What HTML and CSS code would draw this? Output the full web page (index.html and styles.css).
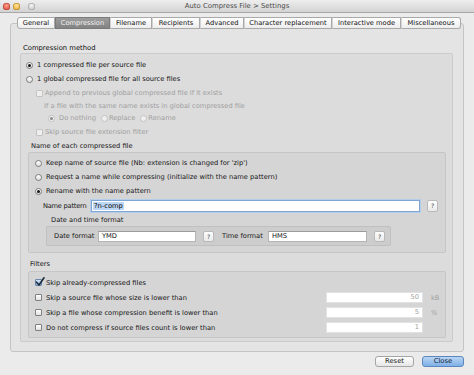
FILE: index.html
```html
<!DOCTYPE html>
<html>
<head>
<meta charset="utf-8">
<title>Auto Compress File &gt; Settings</title>
<link rel="stylesheet" href="styles.css">
</head>
<body>
<div class="titlebar">
  <div class="lights"><span class="light red"></span><span class="light yellow"></span><span class="light grey"></span></div>
  <div class="title">Auto Compress File &gt; Settings</div>
  <div></div>
</div>
<div class="content">
  <div class="pane">
    <div class="tabs">
      <div class="tab first t-general">General</div>
      <div class="tab active t-comp">Compression</div>
      <div class="tab t-file">Filename</div>
      <div class="tab t-recip">Recipients</div>
      <div class="tab t-adv">Advanced</div>
      <div class="tab t-char">Character replacement</div>
      <div class="tab t-inter">Interactive mode</div>
      <div class="tab last t-misc">Miscellaneous</div>
    </div>
    <div class="main-title">Compression method</div>
    <div class="box outer">
      <div class="row r14 ind5"><span class="radio on"></span><span class="lbl">1 compressed file per source file</span></div>
      <div class="row r14 ind5"><span class="radio"></span><span class="lbl">1 global compressed file for all source files</span></div>
      <div class="row r14 ind15 dis"><span class="check dis"></span><span class="lbl2">Append to previous global compressed file if it exists</span></div>
      <div class="row r12 ind23 dis">If a file with the same name exists in global compressed file</div>
      <div class="row r12 ind27 dis opts">
        <span class="opt"><span class="radio on dis"></span><span class="lbl">Do nothing</span></span>
        <span class="opt"><span class="radio dis"></span><span class="lbl1">Replace</span></span>
        <span class="opt"><span class="radio dis"></span><span class="lbl1">Rename</span></span>
      </div>
      <div class="row r14 ind15 dis gap1"><span class="check dis"></span><span class="lbl2">Skip source file extension filter</span></div>

      <div class="sub-title">Name of each compressed file</div>
      <div class="box inner g2">
        <div class="row r14 ind6"><span class="radio"></span><span class="lbl">Keep name of source file (Nb: extension is changed for 'zip')</span></div>
        <div class="row r14 ind6"><span class="radio"></span><span class="lbl">Request a name while compressing (initialize with the name pattern)</span></div>
        <div class="row r14 ind6"><span class="radio on"></span><span class="lbl">Rename with the name pattern</span></div>
        <div class="row r16 ind14">
          <span class="flabel np">Name pattern</span>
          <div class="field focus w329"><span class="sel">?n-comp</span></div>
          <span class="help">?</span>
        </div>
        <div class="row r12 ind22">Date and time format</div>
        <div class="box dt">
          <span class="flabel dl">Date format</span>
          <div class="field w98">YMD</div>
          <span class="help small">?</span>
          <span class="flabel tl">Time format</span>
          <div class="field w99">HMS</div>
          <span class="help small">?</span>
        </div>
      </div>

      <div class="sub-title filt">Filters</div>
      <div class="box inner g3">
        <div class="row r15 ind6"><span class="check on"><svg viewBox="0 0 10 10" width="10" height="10"><path d="M1.5 5.2 L4 8 L9 0.8" fill="none" stroke="#1b2a3c" stroke-width="1.6" stroke-linecap="round" stroke-linejoin="round"/></svg></span><span class="lbl">Skip already-compressed files</span></div>
        <div class="row r15 ind6"><span class="check"></span><span class="lbl">Skip a source file whose size is lower than</span><span class="spacer"></span><div class="field num">50</div><span class="unit">kB</span></div>
        <div class="row r15 ind6"><span class="check"></span><span class="lbl">Skip a file whose compression benefit is lower than</span><span class="spacer"></span><div class="field num">5</div><span class="unit">%</span></div>
        <div class="row r15 ind6"><span class="check"></span><span class="lbl">Do not compress if source files count is lower than</span><span class="spacer"></span><div class="field num">1</div><span class="unit"></span></div>
      </div>
    </div>
  </div>
  <div class="buttons">
    <div class="btn reset">Reset</div>
    <div class="btn close">Close</div>
  </div>
</div>
</body>
</html>
```

FILE: styles.css
```css
* { box-sizing: border-box; margin: 0; padding: 0; }
html, body { width: 474px; height: 375px; overflow: hidden; }
body {
  font-family: "DejaVu Sans", sans-serif;
  font-size: 6.7px;
  color: #161616;
  background: #ebebeb;
}

/* title bar */
.titlebar {
  height: 13px;
  display: grid;
  grid-template-columns: 1fr auto 1fr;
  align-items: center;
  background: linear-gradient(#eeeeee, #d3d3d3);
  border-bottom: 1px solid #a8a8a8;
}
.lights { display: flex; align-items: center; gap: 3px; padding-left: 3px; }
.light { width: 7px; height: 7px; border-radius: 50%; }
.red { background: radial-gradient(circle at 50% 35%, #ff9d8c, #d8402e); box-shadow: inset 0 0 0 0.5px #a33a2a; }
.yellow { background: radial-gradient(circle at 50% 35%, #ffe59a, #e0a126); box-shadow: inset 0 0 0 0.5px #b07d1a; }
.grey { background: radial-gradient(circle at 50% 35%, #f4f4f4, #bdbdbd); box-shadow: inset 0 0 0 0.5px #9a9a9a; margin-left: 5px; }
.title { color: #4c4c4c; font-size: 6.9px; }

/* pane */
.content { padding: 10px 10px 0 10px; }
.pane {
  height: 329px;
  border: 1px solid #c4c4c4;
  border-radius: 3px;
  background: #e4e4e4;
  padding: 0 10px 0 9px;
}
.tabs { display: flex; margin: -7px 0 0 -3px; height: 12px; }
.tab {
  height: 12px;
  line-height: 10px;
  text-align: center;
  border: 1px solid #a9a9a9;
  border-left: 1px solid #d2d2d2;
  background: linear-gradient(#ffffff, #ededed);
  color: #111;
  white-space: nowrap;
  flex: none;
}
.t-general { width: 38px; }
.t-comp { width: 55px; }
.t-file { width: 42px; }
.t-recip { width: 48px; }
.t-adv { width: 44px; }
.t-char { width: 88px; }
.t-inter { width: 69px; }
.t-misc { width: 60px; }
.tab.first { border-left: 1px solid #a9a9a9; border-radius: 3px 0 0 3px; }
.tab.last { border-radius: 0 3px 3px 0; }
.tab.active {
  background: linear-gradient(#9c9c9c, #838383);
  color: #f2f2f2;
  border-color: #7a7a7a;
}

.main-title { margin-top: 14px; height: 10px; line-height: 10px; padding-left: 3px; font-size: 6.8px; color: #0c0c0c; }

.box { border: 1px solid #cbcbcb; border-radius: 2px; }
.outer {
  height: 289px;
  background: #dcdcdc;
  padding: 4px 6px 0 7px;
}
.inner { background: #d5d5d5; border-color: #c6c6c6; }
.g2 { height: 101px; padding-top: 3px; }
.g3 { height: 67px; padding-top: 3px; }

.sub-title { height: 12px; line-height: 12px; padding-left: 3px; margin-top: 1px; }
.sub-title.filt { margin-top: 5px; height: 12px; line-height: 12px; padding-left: 2px; margin-bottom: 1px; }

.row { display: flex; align-items: center; white-space: nowrap; }
.r12 { height: 12px; }
.r14 { height: 14px; }
.r15 { height: 15px; }
.r16 { height: 16px; }
.gap1 { margin-top: 1px; }
.ind5 { padding-left: 5px; margin-left: -7px; }
.ind15 { padding-left: 15px; margin-left: -7px; }
.ind23 { padding-left: 23px; margin-left: -7px; }
.ind27 { padding-left: 27px; margin-left: -7px; }
.ind6 { padding-left: 6px; }
.ind14 { padding-left: 14px; }
.ind22 { padding-left: 22px; }
.dis { color: #9e9e9e; }

.lbl { margin-left: 4px; }
.lbl1 { margin-left: 1px; }
.lbl2 { margin-left: 2px; }
.opts { gap: 5px; }
.opt { display: flex; align-items: center; }

.radio {
  width: 7px; height: 7px; flex: none;
  border-radius: 50%;
  border: 1px solid #7d7d7d;
  background: linear-gradient(#ffffff, #dedede);
  display: flex; align-items: center; justify-content: center;
}
.radio.on::after { content: ""; width: 3px; height: 3px; border-radius: 50%; background: #151515; }
.radio.dis { border-color: #c2c2c2; background: #efefef; }
.radio.on.dis::after { background: #8a8a8a; }

.check {
  position: relative;
  width: 7px; height: 7px; flex: none;
  border: 1px solid #7f7f7f;
  border-radius: 1px;
  background: linear-gradient(#ffffff, #e2e2e2);
}
.check.dis { border-color: #c4c4c4; background: #eeeeee; }
.check.on { background: linear-gradient(#d2e4f7, #93b9e3); border-color: #6a86a8; }
.check svg { position: absolute; left: -1px; top: -3px; }

.field {
  height: 11px;
  line-height: 9px;
  background: #ffffff;
  border: 1px solid #b4b4b4;
  border-top-color: #9c9c9c;
  padding: 0 3px;
  color: #111;
  flex: none;
}
.field.focus {
  height: 12px;
  line-height: 10px;
  border-color: #7fa6d3;
  box-shadow: 0 0 0 1px #b3cdea;
  padding-left: 1px;
}
.sel { background: #bcd6f3; padding: 0 1px; color: #000; }
.w329 { width: 329px; }
.w98 { width: 98px; }
.w99 { width: 99px; }
.flabel { flex: none; }
.np { width: 48px; letter-spacing: -0.25px; }

.help {
  flex: none;
  width: 11px; height: 12px;
  margin-left: 7px;
  border: 1px solid #b9b9b9;
  border-radius: 2px;
  background: linear-gradient(#ffffff, #e9e9e9);
  font-size: 6px;
  line-height: 10px;
  text-align: center;
  color: #333;
}
.help.small { width: 11px; height: 11px; line-height: 9px; }

.dt {
  margin: 0 0 0 17px;
  width: 345px;
  height: 20px;
  background: #cdcdcd;
  border-color: #c0c0c0;
  display: flex;
  align-items: center;
  padding-left: 7px;
}
.dl { width: 44px; }
.tl { width: 46px; margin-left: 8px; }

.spacer { flex: 1; }
.num {
  width: 97px;
  height: 11px;
  text-align: right;
  color: #a0a0a0;
  border-color: #e2e2e2;
  padding-right: 3px;
}
.unit { width: 22px; padding-left: 8px; color: #a0a0a0; }

.buttons { display: flex; justify-content: flex-end; gap: 8px; margin-top: 4px; }
.btn {
  height: 11px;
  line-height: 9px;
  text-align: center;
  border-radius: 3px;
  font-size: 6.8px;
}
.reset { width: 39px; border: 1px solid #a5a5a5; background: linear-gradient(#ffffff, #e6e6e6); color: #1a1a1a; }
.close { width: 42px; border: 1px solid #5d86bf; background: linear-gradient(#b9d5f3, #7fb0e6); color: #0d1f3a; }
```
